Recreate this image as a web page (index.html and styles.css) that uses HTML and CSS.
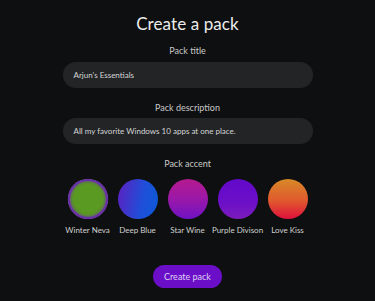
FILE: index.html
```html
<!DOCTYPE html>
<html>
<head>
<meta charset="utf-8">
<link rel="stylesheet" href="styles.css">
</head>
<body>
<main class="page">
  <h1 class="title">Create a pack</h1>
  <label class="label label-first">Pack title</label>
  <div class="input">Arjun's Essentials</div>
  <label class="label">Pack description</label>
  <div class="input">All my favorite Windows 10 apps at one place.</div>
  <label class="label">Pack accent</label>
  <div class="accents">
    <div class="accent">
      <div class="swatch neva selected"></div>
      <span class="accent-name">Winter Neva</span>
    </div>
    <div class="accent">
      <div class="swatch deep"></div>
      <span class="accent-name">Deep Blue</span>
    </div>
    <div class="accent">
      <div class="swatch wine"></div>
      <span class="accent-name">Star Wine</span>
    </div>
    <div class="accent">
      <div class="swatch purple"></div>
      <span class="accent-name">Purple Divison</span>
    </div>
    <div class="accent">
      <div class="swatch kiss"></div>
      <span class="accent-name">Love Kiss</span>
    </div>
  </div>
  <button class="create">Create pack</button>
</main>
</body>
</html>
```
FILE: styles.css
```css
html, body {
  margin: 0;
  padding: 0;
  background: #0e0f10;
  height: 100%;
}
body {
  font-family: Lato, "Noto Sans", sans-serif;
  color: #e4e4e4;
}
.page {
  display: flex;
  flex-direction: column;
  align-items: center;
  padding-top: 13px;
}
.title {
  margin: 0;
  font-size: 17px;
  line-height: 22px;
  font-weight: 400;
  color: #ececec;
  letter-spacing: 0.1px;
}
.label {
  display: block;
  font-size: 9px;
  line-height: 12px;
  color: #c9c9c9;
  margin-top: 14px;
  margin-bottom: 4px;
}
.label-first {
  margin-top: 10px;
  margin-bottom: 5px;
}
.input {
  box-sizing: border-box;
  width: 250px;
  height: 26px;
  border-radius: 13px;
  background: #222426;
  color: #d6d6d6;
  font-size: 8px;
  line-height: 26px;
  padding-left: 11px;
}
.accents {
  display: flex;
  gap: 10px;
  margin-top: 5px;
}
.accent {
  width: 40px;
  display: flex;
  flex-direction: column;
  align-items: center;
}
.swatch {
  width: 40px;
  height: 40px;
  border-radius: 50%;
}
.neva {
  background: #5b9a22;
  box-shadow: inset 0 0 1px 2px #6a2cb0, inset 0 0 3px 3px rgba(106, 44, 176, 0.5), 0 0 1px 0 rgba(106, 44, 176, 0.6);
}
.deep {
  background: linear-gradient(100deg, #5d1fc0 0%, #1f4fd8 60%, #0b5ad8 100%);
}
.wine {
  background: linear-gradient(180deg, #b41a8e 0%, #9a18a8 50%, #7012c4 100%);
}
.purple {
  background: linear-gradient(180deg, #6208c8 0%, #6c10c8 60%, #7c1cba 100%);
}
.kiss {
  background: linear-gradient(180deg, #d88a28 0%, #e0582e 55%, #e0103c 100%);
}
.accent-name {
  margin-top: 5px;
  font-size: 8px;
  line-height: 12px;
  color: #cfcfcf;
  white-space: nowrap;
}
.create {
  margin-top: 29px;
  height: 23px;
  width: 69px;
  border: none;
  border-radius: 12px;
  background: #6a0ec8;
  color: #ddd0f2;
  font-family: Lato, "Noto Sans", sans-serif;
  font-size: 9px;
  padding: 0;
}
```
